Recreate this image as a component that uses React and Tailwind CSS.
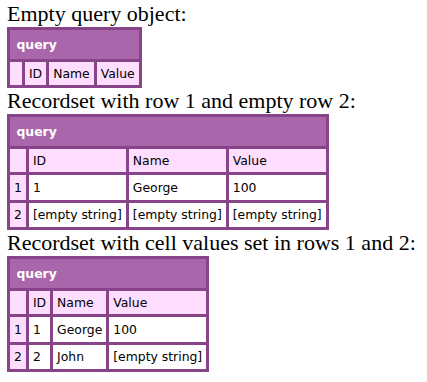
import React from 'react';

const QueryDump = ({ columns, rows }) => (
  <table className="border-separate border-spacing-[3px] bg-[#884488] font-['DejaVu_Sans',Verdana,sans-serif] text-[12.4px] leading-[15.5px] text-black">
    <tbody>
      <tr>
        <th
          colSpan={columns.length + 1}
          className="bg-[#aa66aa] px-[6.5px] py-[6.5px] text-left font-bold text-white"
        >
          query
        </th>
      </tr>
      <tr>
        <td className="bg-[#ffddff] px-[4px] py-[4px]">&nbsp;</td>
        {columns.map((col) => (
          <td key={col} className="bg-[#ffddff] px-[4px] py-[4px]">
            {col}
          </td>
        ))}
      </tr>
      {rows.map((row, i) => (
        <tr key={i}>
          <td className="bg-[#ffddff] px-[4px] py-[4.5px]">{i + 1}</td>
          {row.map((cell, j) => (
            <td key={j} className="bg-white px-[4px] py-[4.5px]">
              {cell}
            </td>
          ))}
        </tr>
      ))}
    </tbody>
  </table>
);

const Heading = ({ children }) => (
  <div className="font-['Liberation_Serif','Times_New_Roman',serif] text-[22px] leading-[26px] text-black">
    {children}
  </div>
);

export default function App() {
  const cols = ['ID', 'Name', 'Value'];

  return (
    <div className="min-h-[382px] bg-white pl-[7px] pt-[1px]">
      <Heading>Empty query object:</Heading>
      <QueryDump columns={cols} rows={[]} />

      <Heading>Recordset with row 1 and empty row 2:</Heading>
      <QueryDump
        columns={cols}
        rows={[
          ['1', 'George', '100'],
          ['[empty string]', '[empty string]', '[empty string]'],
        ]}
      />

      <Heading>Recordset with cell values set in rows 1 and 2:</Heading>
      <QueryDump
        columns={cols}
        rows={[
          ['1', 'George', '100'],
          ['2', 'John', '[empty string]'],
        ]}
      />
    </div>
  );
}
